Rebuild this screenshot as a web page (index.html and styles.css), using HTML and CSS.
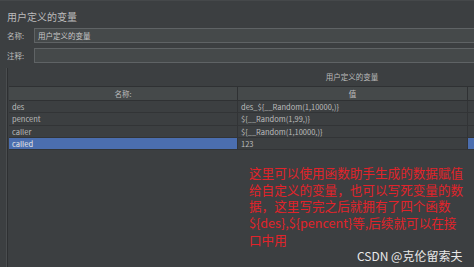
FILE: index.html
```html
<!DOCTYPE html>
<html>
<head>
<meta charset="utf-8">
<link rel="stylesheet" href="styles.css">
</head>
<body>
<div class="page">
  <div class="title">用户定义的变量</div>
  <div class="field">
    <span class="label">名称:</span>
    <div class="input">用户定义的变量</div>
  </div>
  <div class="field">
    <span class="label">注释:</span>
    <div class="input"></div>
  </div>
  <div class="panel">
    <div class="caption">用户定义的变量</div>
    <div class="table">
      <div class="row head">
        <div class="cell">名称:</div>
        <div class="cell">值</div>
        <div class="cell"></div>
      </div>
      <div class="row">
        <div class="cell">des</div>
        <div class="cell">des_${__Random(1,10000,)}</div>
        <div class="cell"></div>
      </div>
      <div class="row">
        <div class="cell">pencent</div>
        <div class="cell">${__Random(1,99,)}</div>
        <div class="cell"></div>
      </div>
      <div class="row">
        <div class="cell">caller</div>
        <div class="cell">${__Random(1,10000,)}</div>
        <div class="cell"></div>
      </div>
      <div class="row selected">
        <div class="cell">called</div>
        <div class="cell editing">123</div>
        <div class="cell"></div>
      </div>
    </div>
  </div>
  <div class="note">
    <div class="line">这里可以使用函数助手生成的数据赋值</div>
    <div class="line">给自定义的变量，也可以写死变量的数</div>
    <div class="line">据，这里写完之后就拥有了四个函数</div>
    <div class="line">${des},${pencent}等,后续就可以在接</div>
    <div class="line">口中用</div>
  </div>
  <div class="mark">CSDN @克伦留索夫</div>
</div>
</body>
</html>
```
FILE: styles.css
```css
html, body {
  margin: 0;
  padding: 0;
  width: 474px;
  height: 267px;
  overflow: hidden;
  background: #3c3f41;
}
.page {
  position: relative;
  width: 474px;
  height: 267px;
  overflow: hidden;
  font-family: "Noto Sans CJK SC", "Noto Sans", sans-serif;
  color: #bbbbbb;
  border-top: 1px solid #45484a;
  box-sizing: border-box;
}
.title {
  font-size: 10px;
  line-height: 14px;
  padding: 9px 0 4px 7px;
}
.field {
  display: flex;
  align-items: center;
  height: 15px;
  margin-bottom: 5px;
}
.label {
  width: 27px;
  padding-left: 7px;
  font-size: 7.5px;
  flex: none;
}
.input {
  flex: 1;
  height: 13px;
  background: #45494a;
  border: 1px solid #5f6365;
  border-right: none;
  font-size: 7.5px;
  line-height: 13px;
  padding-left: 3px;
  color: #c8c8c8;
}
.panel {
  margin-left: 7px;
  width: 688px;
  height: 210px;
  border-left: 1px solid #2e3032;
  box-shadow: -1px 0 0 #4a4d4f;
}
.caption {
  text-align: center;
  font-size: 7.5px;
  height: 18px;
  line-height: 18px;
}
.table {
  margin-left: 1px;
}
.row {
  display: grid;
  grid-template-columns: 229px 230px 229px;
  height: 12.3px;
  border-bottom: 1px solid #323436;
  box-sizing: border-box;
  font-size: 7.5px;
}
.row.head {
  height: 15px;
  background: #45494a;
  border-top: 1px solid #2f3133;
  border-bottom: 1px solid #2f3133;
}
.row.head .cell {
  text-align: center;
  line-height: 14px;
  padding: 0;
  border-right: 1px solid #2f3133;
}
.cell {
  padding-left: 3px;
  line-height: 11.3px;
  white-space: nowrap;
  overflow: hidden;
  border-right: 1px solid #323436;
}
.row.selected .cell {
  background: #4b6eaf;
  color: #e6e6e6;
}
.row.selected .cell.editing {
  background: #3c3f41;
  color: #bbbbbb;
}
.note {
  position: absolute;
  left: 249px;
  top: 164px;
  font-size: 12.6px;
  color: #e2232a;
  white-space: nowrap;
}
.line {
  height: 16.7px;
  line-height: 16.7px;
  overflow: visible;
}
.mark {
  position: absolute;
  left: 357px;
  top: 246px;
  font-size: 12px;
  line-height: 17px;
  color: #e8e8e8;
  white-space: nowrap;
}
```
